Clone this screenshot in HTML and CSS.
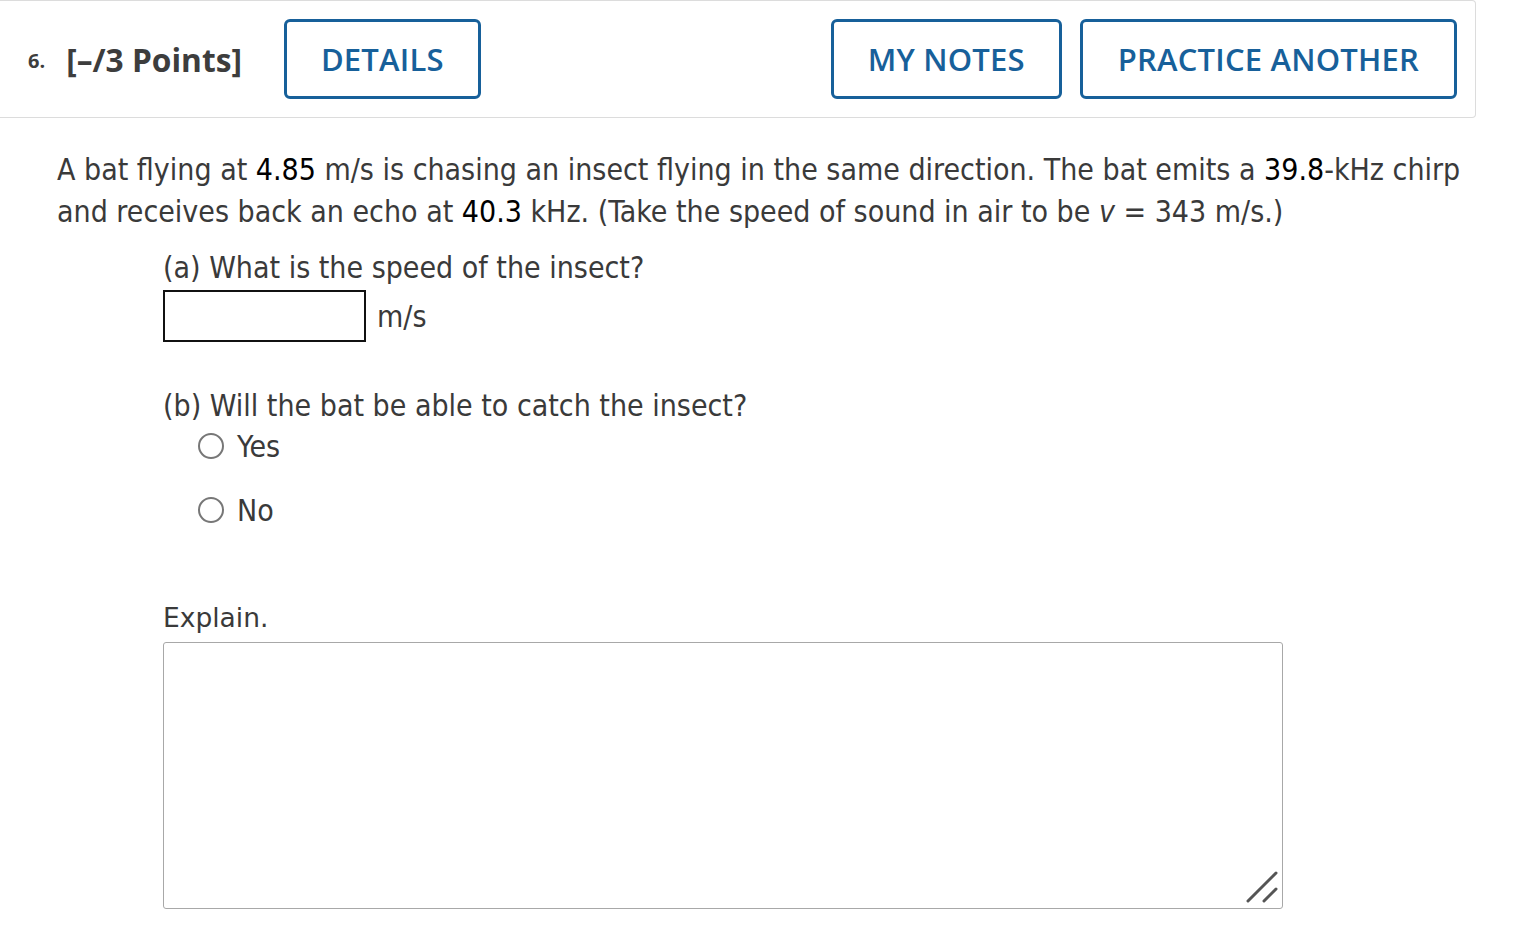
FILE: index.html
```html
<!DOCTYPE html>
<html>
<head>
<meta charset="utf-8">
<link rel="stylesheet" href="styles.css">
</head>
<body>
<div class="header">
  <span class="qnum">6.</span>
  <span class="points">[–/3 Points]</span>
  <button class="btn btn-details">DETAILS</button>
  <div class="spacer"></div>
  <button class="btn">MY NOTES</button>
  <button class="btn btn-practice">PRACTICE ANOTHER</button>
</div>
<div class="content">
  <p class="stem">A bat flying at <span class="num">4.85</span> m/s is chasing an insect flying in the same direction. The bat emits a <span class="num">39.8</span>-kHz chirp and receives back an echo at <span class="num">40.3</span> kHz. (Take the speed of sound in air to be <i>v</i> = 343 m/s.)</p>
  <div class="part part-a">
    <div class="q">(a) What is the speed of the insect?</div>
    <div class="answer-row"><span class="input"></span><span class="unit">m/s</span></div>
  </div>
  <div class="part part-b">
    <div class="q">(b) Will the bat be able to catch the insect?</div>
    <div class="options">
      <label class="opt"><span class="radio"></span>Yes</label>
      <label class="opt"><span class="radio"></span>No</label>
    </div>
  </div>
  <div class="explain">
    <div class="explain-label">Explain.</div>
    <div class="textarea">
      <svg class="grip" width="36" height="36" viewBox="0 0 36 36"><path d="M4 32 L32 4 M20 32 L32 20" stroke="#555" stroke-width="3" stroke-linecap="round" fill="none"/></svg>
    </div>
  </div>
</div>
</body>
</html>
```
FILE: styles.css
```css
html, body { margin: 0; padding: 0; background: #fff; }
body { font-family: "DejaVu Sans Condensed", "DejaVu Sans", sans-serif; color: #3a3a3a; }
.header {
  width: 1476px;
  height: 118px;
  box-sizing: border-box;
  border: 1px solid #dcdcdc;
  border-left: none;
  border-radius: 0 4px 4px 0;
  display: flex;
  align-items: center;
  padding-left: 28px;
  padding-right: 18px;
  font-family: "Open Sans", sans-serif;
}
.qnum { font-weight: 700; font-size: 20px; color: #3d3d3d; margin-right: 21px; margin-top: 2px; }
.points { font-weight: 700; font-size: 31.7px; color: #3d3d3d; margin-right: 42px; }
.spacer { flex: 1; }
.btn {
  font-family: "Open Sans", sans-serif;
  font-size: 31px;
  font-weight: 600;
  color: #17609a;
  background: #fff;
  border: 3px solid #17609a;
  border-radius: 6px;
  height: 80px;
  padding: 0 34px;
  margin-left: 18px;
  letter-spacing: 0.2px;
}
.btn-details { margin-left: 0; }
.btn-practice { padding: 0 35px; }
.content { padding-left: 57px; }
.stem { margin: 31px 0 0; font-size: 30px; line-height: 42px; width: 1430px; }
.num { color: #000; }
.part { margin-left: 106px; font-size: 30px; }
.part-a { margin-top: 14px; }
.q { line-height: 42px; }
.answer-row { display: flex; align-items: center; margin-top: 1px; }
.input { width: 199px; height: 48px; border: 2px solid #111; display: inline-block; }
.unit { margin-left: 11px; }
.part-b { margin-top: 43px; }
.options { padding-left: 35px; }
.opt { display: flex; align-items: center; height: 38px; margin-bottom: 26px; }
.radio { width: 26px; height: 26px; border: 2px solid #777; border-radius: 50%; margin-right: 13px; box-sizing: border-box; }
.explain { margin-left: 106px; margin-top: 68px; }
.explain-label { font-family: "DejaVu Sans", sans-serif; font-size: 26.5px; line-height: 42px; }
.textarea {
  width: 1120px;
  height: 267px;
  box-sizing: border-box;
  border: 1px solid #a8a8a8;
  border-radius: 3px;
  margin-top: 3px;
  position: relative;
}
.grip { position: absolute; right: 2px; bottom: 3px; }
```
